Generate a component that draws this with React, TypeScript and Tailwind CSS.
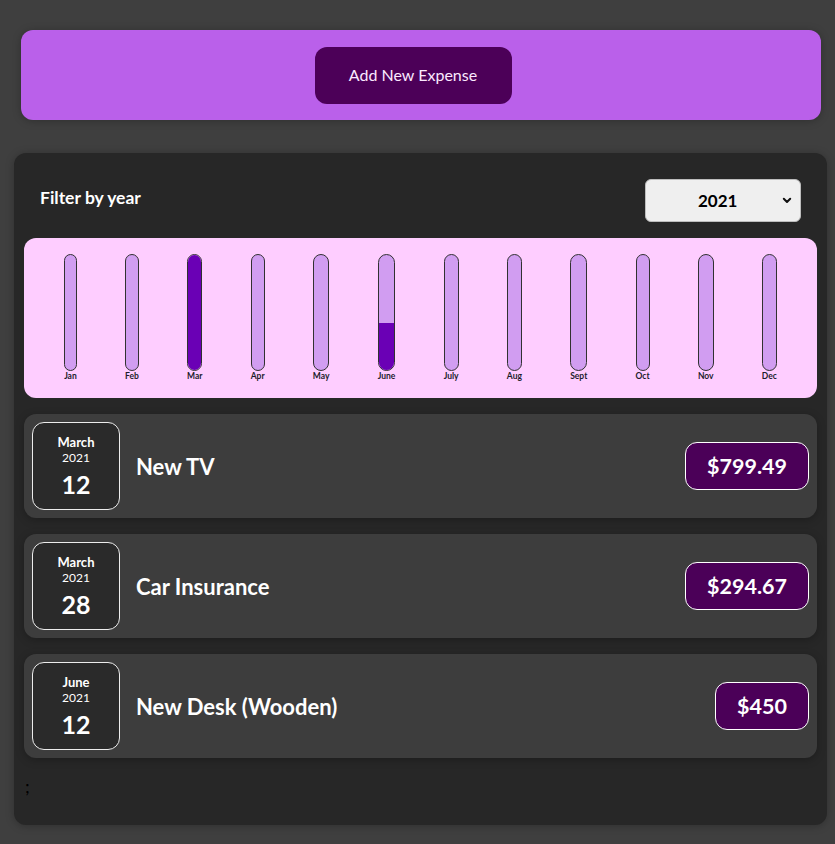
import React from "react";

type Expense = { id: string; title: string; amount: number; date: Date };

const expenses: Expense[] = [
  { id: "e1", title: "New TV", amount: 799.49, date: new Date(2021, 2, 12) },
  { id: "e2", title: "Car Insurance", amount: 294.67, date: new Date(2021, 2, 28) },
  { id: "e3", title: "New Desk (Wooden)", amount: 450, date: new Date(2021, 5, 12) },
];

const months = ["Jan", "Feb", "Mar", "Apr", "May", "June", "July", "Aug", "Sept", "Oct", "Nov", "Dec"];

function ChartBar({ label, value, max }: { label: string; value: number; max: number }) {
  const pct = max > 0 ? Math.round((value / max) * 100) + "%" : "0%";
  return (
    <div className="flex h-full flex-col items-center">
      <div className="flex w-full flex-1 flex-col justify-end overflow-hidden rounded-xl border border-[#313131] bg-[#d19df1]">
        <div className="bg-[#6a00b5]" style={{ height: pct }} />
      </div>
      <div className="text-center text-[8.5px] font-bold leading-[11px] text-[#1c1c2c]">{label}</div>
    </div>
  );
}

function ExpenseDate({ date }: { date: Date }) {
  const month = date.toLocaleString("en-US", { month: "long" });
  const day = date.toLocaleString("en-US", { day: "2-digit" });
  const year = date.getFullYear();
  return (
    <div className="flex h-[88px] w-[88px] shrink-0 flex-col items-center justify-center rounded-xl border border-[#ececec] bg-[#2a2a2a] text-white">
      <div className="text-[13px] font-bold leading-4">{month}</div>
      <div className="text-[12px] leading-4">{year}</div>
      <div className="mt-[4px] text-[25px] font-bold leading-[28px]">{day}</div>
    </div>
  );
}

export default function App() {
  const values = months.map(() => 0);
  expenses.forEach((e) => {
    values[e.date.getMonth()] += e.amount;
  });
  const max = Math.max(...values);

  return (
    <div className="min-h-screen bg-[#3f3f3f] pt-[30px] font-['Lato','Noto_Sans',sans-serif]">
      <div className="ml-[21px] flex h-[90px] w-[800px] items-center justify-center rounded-xl bg-[#ba60ea] shadow-[0_1px_8px_rgba(0,0,0,0.25)]">
        <button className="mr-4 h-[57px] w-[197px] rounded-xl bg-[#4c0058] text-[16px] text-[#fbe9ff]">
          Add New Expense
        </button>
      </div>

      <div className="mt-[33px] ml-[14px] h-[672px] w-[813px] rounded-xl bg-[#272727] p-[10px] shadow-[0_1px_8px_rgba(0,0,0,0.25)]">
        <div className="my-4 flex items-center justify-between px-4 text-white">
          <label className="-mt-1 text-[17.5px] font-bold">Filter by year</label>
          <div className="relative">
            <select
              defaultValue="2021"
              className="h-[43px] w-[156px] appearance-none rounded-md border border-[#bdbdbd] bg-[#efefef] pl-[52px] text-[17px] font-bold text-black outline-none"
            >
              <option value="2022">2022</option>
              <option value="2021">2021</option>
              <option value="2020">2020</option>
              <option value="2019">2019</option>
            </select>
            <svg
              className="pointer-events-none absolute right-[9px] top-[18px]"
              width="10"
              height="7"
              viewBox="0 0 10 7"
              fill="none"
            >
              <path d="M1.8 1.8 L5 5 L8.2 1.8" stroke="#111" strokeWidth="2" strokeLinecap="round" strokeLinejoin="round" />
            </svg>
          </div>
        </div>

        <div className="flex h-[160px] justify-around rounded-xl bg-[#fecdff] p-4 text-center">
          {months.map((m, i) => (
            <ChartBar key={m} label={m} value={values[i]} max={max} />
          ))}
        </div>

        <ul className="mt-4 flex flex-col gap-4">
          {expenses.map((e) => (
            <li
              key={e.id}
              className="flex h-[104px] items-center rounded-xl bg-[#3d3d3d] p-2 shadow-[0_2px_8px_rgba(0,0,0,0.25)]"
            >
              <ExpenseDate date={e.date} />
              <h2 className="ml-4 flex-1 text-[22px] font-bold text-white">{e.title}</h2>
              <div className="flex h-[48px] items-center rounded-xl border border-white bg-[#4b0058] px-[21px] text-[21.5px] font-bold text-white">
                ${e.amount}
              </div>
            </li>
          ))}
        </ul>
        <p className="mt-4 ml-px text-[18px] leading-6 text-black">;</p>
      </div>
    </div>
  );
}
